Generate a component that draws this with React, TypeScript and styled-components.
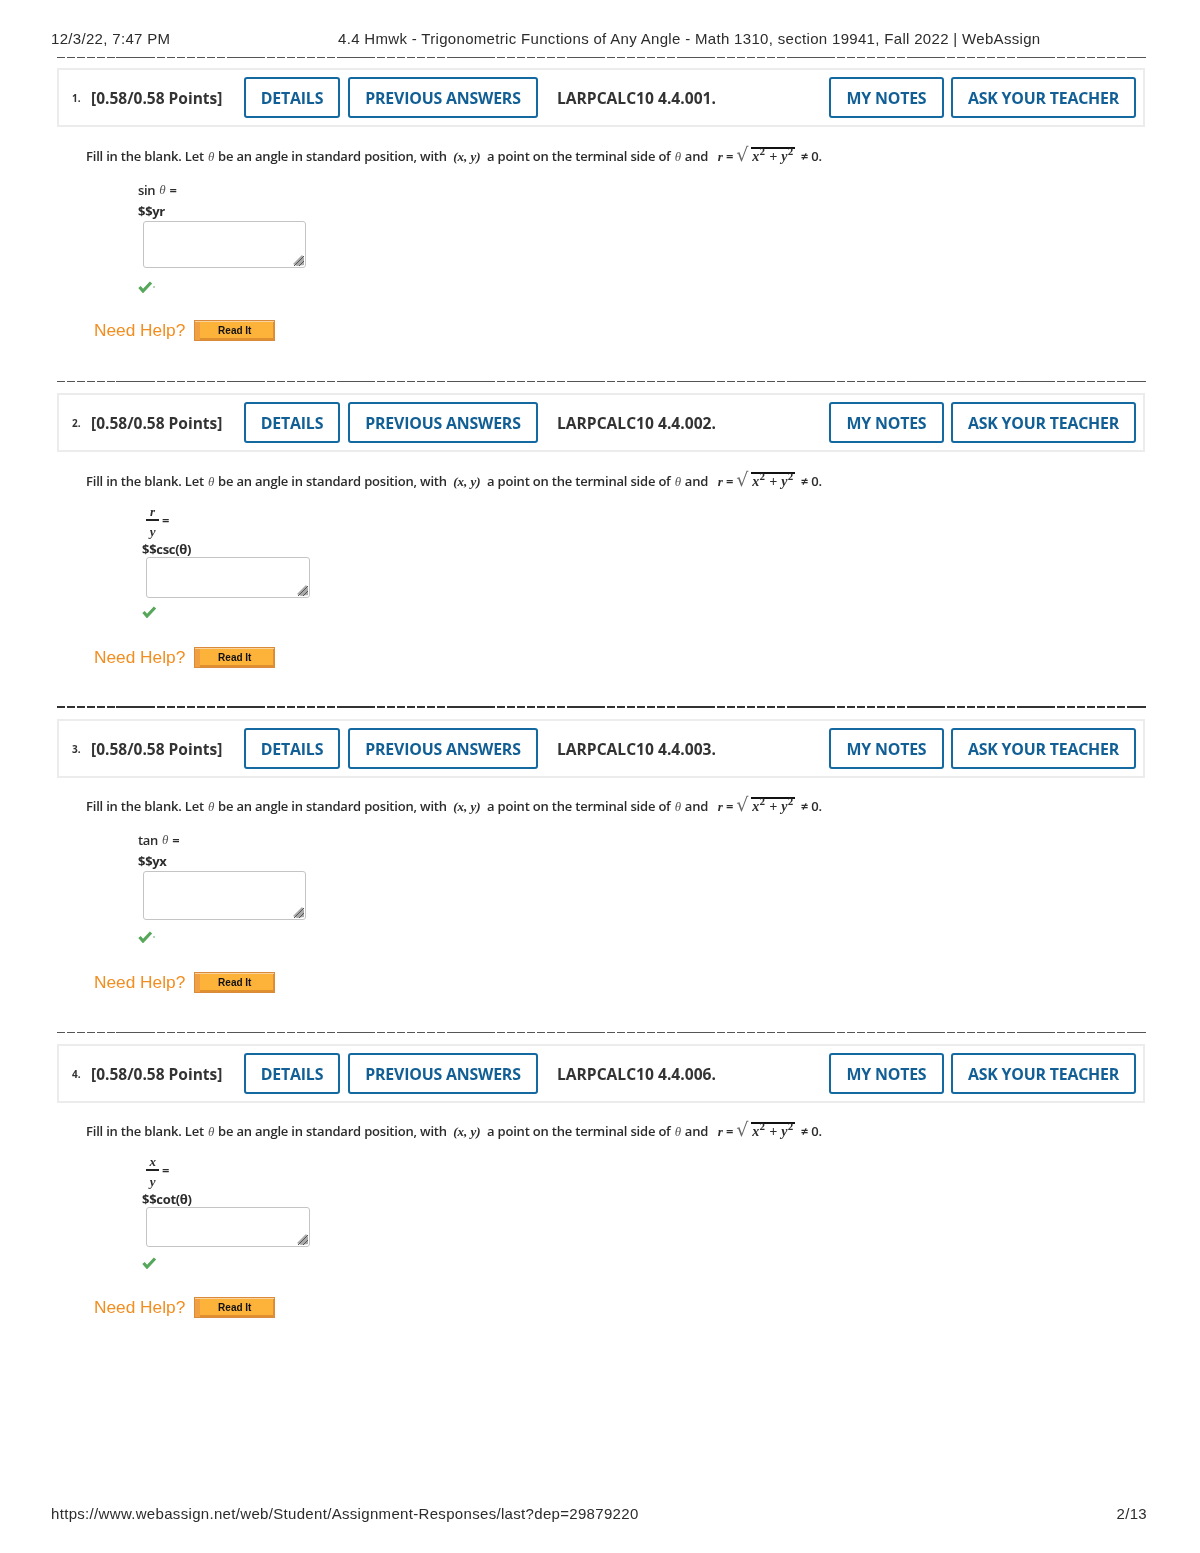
import React from "react";
import styled, { createGlobalStyle } from "styled-components";

const Global = createGlobalStyle`
  html, body { margin: 0; padding: 0; background: #fff; }
`;

const Page = styled.div`
  width: 1200px;
  height: 1553px;
  box-sizing: border-box;
  padding: 30px 53px 31px 51px;
  display: flex;
  flex-direction: column;
  font-family: "Liberation Sans", Arial, sans-serif;
  color: #222;
  filter: blur(0.5px);
`;

const PrintLine = styled.header`
  display: flex;
  height: 17px;
  align-items: center;
  font-size: 15px;
  letter-spacing: 0.32px;
  color: #2c2c2c;
  white-space: nowrap;
`;

const Stamp = styled.span`
  width: 287px;
`;

const Footer = styled(PrintLine)`
  margin-top: auto;
  justify-content: space-between;
`;

const Sheet = styled.main`
  margin: 10px 0 0 6px;
  width: 1089px;
`;

const Section = styled.section<{ $height: number }>`
  height: ${(p) => p.$height}px;
  display: flex;
  flex-direction: column;
`;

const Rule = styled.div<{ $dark?: boolean }>`
  height: ${(p) => (p.$dark ? 2 : 1)}px;
  flex: none;
  background:
    repeating-linear-gradient(90deg, transparent 0 59px, ${(p) => (p.$dark ? "#333" : "#555")} 59px 92px, transparent 92px 113px),
    repeating-linear-gradient(90deg, ${(p) => (p.$dark ? "#333" : "#555")} 0 8px, transparent 8px 10px);
`;

const Card = styled.div<{ $gap: number }>`
  margin: ${(p) => p.$gap}px 1px 0 0;
  height: 59px;
  flex: none;
  box-sizing: border-box;
  border: 2px solid #ececec;
  display: flex;
  align-items: center;
  padding: 0 7px 0 13px;
  font-family: "Open Sans", sans-serif;
  font-weight: 700;
  color: #333;
`;

const Num = styled.span`
  width: 19px;
  font-size: 10px;
`;

const Points = styled.span`
  width: 153px;
  font-size: 15.5px;
  white-space: nowrap;
`;

const ActionButton = styled.button<{ $width: number }>`
  width: ${(p) => p.$width}px;
  height: 41px;
  margin-right: 8px;
  padding: 0;
  box-sizing: border-box;
  background: #fff;
  border: 2.5px solid #1469a0;
  border-radius: 3px;
  color: #125f95;
  font-family: "Open Sans", sans-serif;
  font-weight: 700;
  font-size: 15.9px;
  letter-spacing: -0.2px;
  white-space: nowrap;
`;

const Code = styled.span`
  margin-left: 11px;
  font-size: 15.6px;
  white-space: nowrap;
`;

const RightActions = styled.div`
  margin-left: auto;
  display: flex;
  & > button:first-child { margin-right: 7px; }
  & > button:last-child { margin-right: 0; }
`;

const Prompt = styled.p<{ $top: number }>`
  margin: ${(p) => p.$top}px 0 0 29px;
  height: 18px;
  line-height: 14px;
  font-family: "Open Sans", sans-serif;
  font-weight: 600;
  font-size: 13px;
  letter-spacing: -0.2px;
  color: #2c2c2c;
  white-space: pre;
`;

const Theta = styled.i`
  font-family: "Liberation Serif", serif;
  font-weight: 400;
  font-size: 13px;
  margin: 0 4px;
  color: #555;
`;

const Var = styled.i`
  font-family: "Liberation Serif", serif;
  font-weight: 700;
  font-size: 13px;
  letter-spacing: 0;
`;

const Radical = styled.span`
  font-family: "DejaVu Sans", sans-serif;
  font-weight: 400;
  font-size: 19px;
  line-height: 14px;
  margin-right: 4px;
  color: #666;
`;

const Radicand = styled.span`
  display: inline-block;
  border-top: 2px solid #111;
  padding: 0 1px;
  margin: 0 3px 0 -1px;
  line-height: 15px;
  font-family: "Liberation Serif", serif;
  font-weight: 700;
  font-style: italic;
  font-size: 14px;
  letter-spacing: 0.3px;
  sup { font-size: 11px; line-height: 0; font-style: normal; }
`;

const Answer = styled.div<{ $indent: number; $top: number }>`
  margin: ${(p) => p.$top}px 0 0 ${(p) => p.$indent}px;
  display: flex;
  flex-direction: column;
  align-items: flex-start;
  font-family: "Open Sans", sans-serif;
  font-weight: 600;
  font-size: 13px;
  letter-spacing: -0.3px;
  color: #2c2c2c;
`;

const Equation = styled.div`
  height: 23px;
  display: flex;
  align-items: center;
  white-space: pre;
`;

const Fraction = styled.div`
  display: flex;
  align-items: flex-start;
  margin-left: 4px;
  height: 39px;
`;

const FractionStack = styled.span`
  display: flex;
  flex-direction: column;
  align-items: center;
  width: 13px;
  padding-top: 2px;
  font-family: "Liberation Serif", serif;
  font-style: italic;
  font-weight: 700;
  font-size: 13px;
  line-height: 14px;
`;

const FractionBar = styled.span`
  width: 100%;
  height: 2px;
  background: #222;
`;

const Denominator = styled.span`
  line-height: 22px;
`;

const Equals = styled.span`
  line-height: 34px;
  margin-left: 3px;
`;

const Source = styled.div<{ $height: number }>`
  height: ${(p) => p.$height}px;
  line-height: ${(p) => p.$height}px;
  font-weight: 700;
`;

const BoxWrap = styled.div<{ $height: number; $inset: number; $width: number }>`
  position: relative;
  margin-left: ${(p) => p.$inset}px;
  width: ${(p) => p.$width}px;
  height: ${(p) => p.$height}px;
`;

const Box = styled.textarea`
  display: block;
  width: 100%;
  height: 100%;
  box-sizing: border-box;
  border: 1.5px solid #c4c4c4;
  border-radius: 3px;
  background: #fff;
  resize: none;
  margin: 0;
`;

const Grip = styled.svg`
  position: absolute;
  right: 1px;
  bottom: 1px;
`;

const Check = styled.svg<{ $top: number }>`
  display: block;
  margin-top: ${(p) => p.$top}px;
`;

const Help = styled.div<{ $top: number }>`
  margin: ${(p) => p.$top}px 0 0 37px;
  display: flex;
  align-items: center;
  gap: 9px;
  font-family: "Liberation Sans", sans-serif;
  font-size: 17.3px;
  color: #f28d1f;
`;

const ReadIt = styled.button`
  width: 81px;
  height: 21px;
  padding: 0;
  box-sizing: border-box;
  background: #fdb23a;
  border: 1px solid #d98a3a;
  box-shadow: inset 0 1px 0 #f9d3a0, inset 5px 0 0 #f0a040, inset -1px -2px 0 #e08f30;
  color: #111;
  font-family: "Liberation Sans", sans-serif;
  font-weight: 700;
  font-size: 10px;
`;

type Q = {
  n: number;
  code: string;
  height: number;
  gap: number;
  promptTop: number;
  dark?: boolean;
  fn?: string;
  frac?: string;
  source: string;
  box: number;
  checkTop: number;
  helpTop: number;
};

const questions: Q[] = [
  { n: 1, code: "001", height: 324, gap: 10, promptTop: 20, fn: "sin", source: "$$yr", box: 47, checkTop: 12, helpTop: 27 },
  { n: 2, code: "002", height: 325, gap: 11, promptTop: 20, frac: "r", source: "$$csc(θ)", box: 41, checkTop: 7, helpTop: 29 },
  { n: 3, code: "003", height: 326, gap: 11, promptTop: 19, dark: true, fn: "tan", source: "$$yx", box: 49, checkTop: 10, helpTop: 29 },
  { n: 4, code: "006", height: 325, gap: 11, promptTop: 19, frac: "x", source: "$$cot(θ)", box: 40, checkTop: 9, helpTop: 28 },
];

const Sqrt = () => (
  <>
    <Radical>√</Radical>
    <Radicand>
      x<sup>2</sup> + y<sup>2</sup>
    </Radicand>
  </>
);

const Tick = ({ top, dot }: { top: number; dot: boolean }) => (
  <Check $top={top} width="18" height="13" viewBox="0 0 18 13">
    <path d="M1.5 7 L5 11 L13 2.5" fill="none" stroke="#56a75a" strokeWidth="3.2" />
    {dot && <circle cx="16" cy="7" r="0.8" fill="#56a75a" />}
  </Check>
);

function Question({ q }: { q: Q }) {
  const isFrac = Boolean(q.frac);
  return (
    <Section $height={q.height}>
      <Rule $dark={q.dark} />
      <Card $gap={q.gap}>
        <Num>{q.n}.</Num>
        <Points>[0.58/0.58 Points]</Points>
        <ActionButton $width={96}>DETAILS</ActionButton>
        <ActionButton $width={190}>PREVIOUS ANSWERS</ActionButton>
        <Code>LARPCALC10 4.4.{q.code}.</Code>
        <RightActions>
          <ActionButton $width={115}>MY NOTES</ActionButton>
          <ActionButton $width={185}>ASK YOUR TEACHER</ActionButton>
        </RightActions>
      </Card>
      <Prompt $top={q.promptTop}>
        Fill in the blank. Let<Theta>θ</Theta>be an angle in standard position, with{"  "}
        <Var>(x, y)</Var>{"  "}a point on the terminal side of<Theta>θ</Theta>and{"   "}
        <Var>r</Var> = <Sqrt /> ≠ 0.
      </Prompt>
      <Answer $indent={isFrac ? 85 : 81} $top={13}>
        {isFrac ? (
          <Fraction>
            <FractionStack>
              {q.frac}
              <FractionBar />
              <Denominator>y</Denominator>
            </FractionStack>
            <Equals>=</Equals>
          </Fraction>
        ) : (
          <Equation>
            {q.fn}<Theta>θ</Theta>=
          </Equation>
        )}
        <Source $height={isFrac ? 15 : 20}>{q.source}</Source>
        <BoxWrap $height={q.box} $inset={isFrac ? 4 : 5} $width={isFrac ? 164 : 163}>
          <Box aria-label={`Answer ${q.n}`} />
          <Grip width="14" height="14" viewBox="0 0 14 14">
            <path d="M2 11 L11 2 L13 5 L13 12 L6 13 Z" fill="#a9a9a9" />
            <path d="M3 13 L13 3 M8 13 L13 8" stroke="#555" strokeWidth="1" />
          </Grip>
        </BoxWrap>
        <Tick top={q.checkTop} dot={!isFrac} />
      </Answer>
      <Help $top={q.helpTop}>
        Need Help? <ReadIt>Read It</ReadIt>
      </Help>
    </Section>
  );
}

export default function App() {
  return (
    <>
      <Global />
      <Page>
        <PrintLine>
          <Stamp>12/3/22, 7:47 PM</Stamp>
          4.4 Hmwk - Trigonometric Functions of Any Angle - Math 1310, section 19941, Fall 2022 | WebAssign
        </PrintLine>
        <Sheet>
          {questions.map((q) => (
            <Question key={q.n} q={q} />
          ))}
        </Sheet>
        <Footer>
          <span>https://www.webassign.net/web/Student/Assignment-Responses/last?dep=29879220</span>
          <span>2/13</span>
        </Footer>
      </Page>
    </>
  );
}
